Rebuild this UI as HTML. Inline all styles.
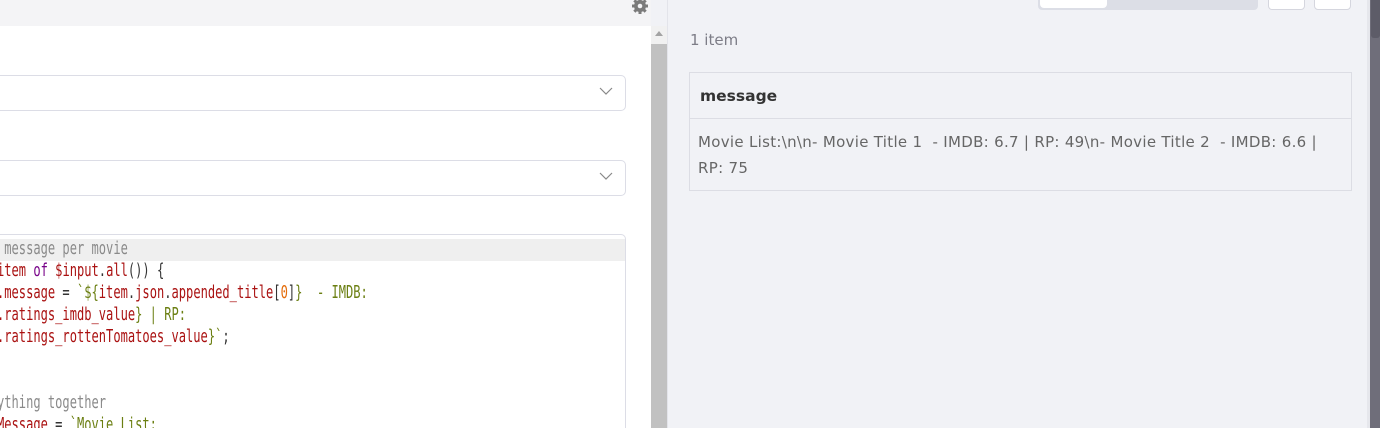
<!DOCTYPE html>
<html><head><style>
*{margin:0;padding:0;box-sizing:border-box}
html,body{width:1380px;height:428px;overflow:hidden}
body{position:relative;background:#f1f2f6;font-family:"Liberation Sans",sans-serif}
.abs{position:absolute}
.code{font-family:"DejaVu Sans Mono","Liberation Mono",monospace;font-size:17.5px;line-height:22px;white-space:pre;color:#333;transform:scaleX(0.69);transform-origin:0 0}
.c{color:#8a8a8a}.v{color:#a11}.k{color:#708}.s{color:#6b7f12}.n{color:#e46c0a}
.os{font-family:"DejaVu Sans",sans-serif}
</style></head><body>
<div class="abs" style="left:0;top:0;width:651px;height:26px;background:#f4f4f6"></div>
<svg class="abs" style="left:631px;top:-3px" width="18" height="18" viewBox="0 0 18 18"><g fill="#7b7b7b"><circle cx="9" cy="9" r="6"/><rect x="7.5" y="1" width="3" height="16"/><rect x="1" y="7.5" width="16" height="3"/><rect x="7.5" y="1" width="3" height="16" transform="rotate(45 9 9)"/><rect x="7.5" y="1" width="3" height="16" transform="rotate(-45 9 9)"/></g><circle cx="9" cy="9" r="2.3" fill="#f4f4f6"/></svg>
<div class="abs" style="left:0;top:26px;width:651px;height:402px;background:#fff"></div>
<div class="abs" style="left:651px;top:26px;width:16px;height:402px;background:#f1f1f1"></div>
<div class="abs" style="left:651px;top:44px;width:16px;height:384px;background:#c1c1c1"></div>
<div class="abs" style="left:655px;top:31px;width:0;height:0;border-left:4px solid transparent;border-right:4px solid transparent;border-bottom:5px solid #a3a3a3"></div>
<div class="abs" style="left:667px;top:0;width:1px;height:428px;background:#e3e4ea"></div>

<div class="abs" style="left:-10px;top:75px;width:636px;height:36px;border:1px solid #dcdde6;border-radius:5px;background:#fff"></div>
<svg class="abs" style="left:599px;top:86px" width="14" height="10"><path d="M1 2 L7 8 L13 2" fill="none" stroke="#888" stroke-width="1.2"/></svg>
<div class="abs" style="left:-10px;top:160px;width:636px;height:36px;border:1px solid #dcdde6;border-radius:5px;background:#fff"></div>
<svg class="abs" style="left:599px;top:171px" width="14" height="10"><path d="M1 2 L7 8 L13 2" fill="none" stroke="#888" stroke-width="1.2"/></svg>

<div class="abs" style="left:-10px;top:234px;width:636px;height:194px;border:1px solid #dcdde6;border-bottom:none;border-radius:5px 5px 0 0;background:#fff;overflow:hidden">
<div class="abs" style="left:0;top:4px;width:636px;height:22px;background:#efefef"></div>
</div>
<div class="abs code" style="left:-3px;top:238px"><span class="c"> message per movie</span>
<span class="v">item</span> <span class="k">of</span> <span class="v">$input</span>.<span class="v">all</span>()) {
<span class="v">.message</span> = <span class="s">`${</span><span class="v">item</span>.<span class="v">json</span>.<span class="v">appended_title</span>[<span class="n">0</span>]<span class="s">}  - IMDB:</span>
<span class="v">.ratings_imdb_value</span><span class="s">} | RP:</span>
<span class="v">.ratings_rottenTomatoes_value</span><span class="s">}`</span>;


<span class="c">ything together</span>
<span class="v">Message</span> = <span class="s">`Movie List:</span></div>

<div class="abs" style="left:1038px;top:-4px;width:220px;height:14px;background:#dcdee6;border-radius:4px"></div>
<div class="abs" style="left:1040px;top:-4px;width:67px;height:12px;background:#fff;border-radius:4px"></div>
<div class="abs" style="left:1268px;top:-4px;width:37px;height:14px;background:#fff;border:1px solid #d5d6de;border-radius:4px"></div>
<div class="abs" style="left:1314px;top:-4px;width:37px;height:14px;background:#fff;border:1px solid #d5d6de;border-radius:4px"></div>

<div class="abs os" style="left:690px;top:31px;font-size:15px;color:#7d7d87">1 item</div>
<div class="abs" style="left:689px;top:72px;width:663px;height:119px;border:1px solid #dcdde4">
<div class="os" style="height:46px;border-bottom:1px solid #dcdde4;padding:14px 10px 0;font-weight:bold;font-size:15.5px;color:#333">message</div>
<div class="os" style="padding:10px 8px;font-size:15px;line-height:26px;color:#666;letter-spacing:0.3px;white-space:nowrap">Movie List:\n\n- Movie Title 1&nbsp; - IMDB: 6.7 | RP: 49\n- Movie Title 2&nbsp; - IMDB: 6.6 |<br>RP: 75</div>
</div>

<div class="abs" style="left:1367px;top:0;width:3px;height:428px;background:#e6e7ec"></div>
<div class="abs" style="left:1370px;top:0;width:10px;height:428px;background:#6f6e7a"></div>
<div class="abs" style="left:1371px;top:0;width:9px;height:38px;background:#5d5c68;border-radius:0 0 3px 3px"></div>
</body></html>
